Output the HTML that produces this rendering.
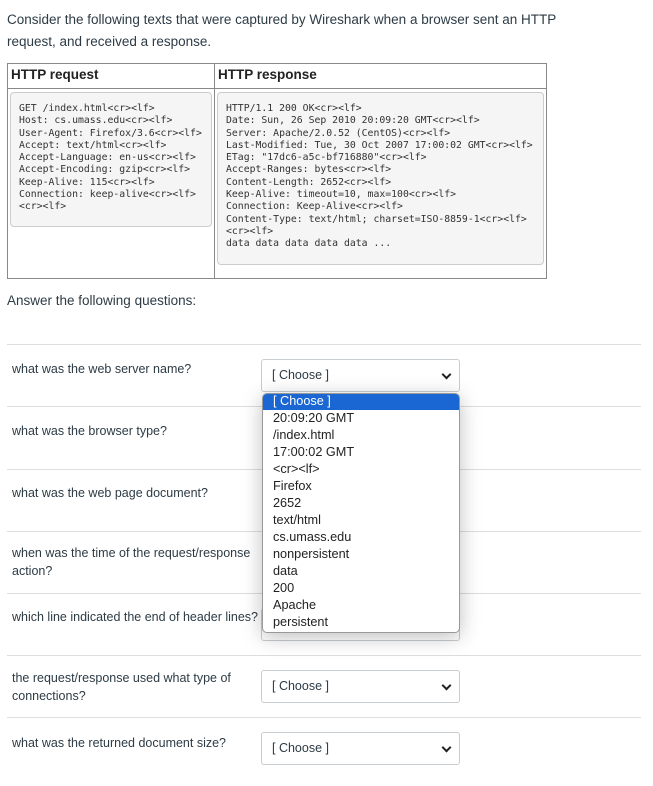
<!DOCTYPE html>
<html><head><meta charset="utf-8"><style>
body{margin:0;width:653px;height:786px;background:#fff;font-family:"Liberation Sans",sans-serif;color:#2d3b45;position:relative;overflow:hidden}
.a{position:absolute}
.t{font-size:13px;line-height:19px}
pre{margin:0;font-family:"DejaVu Sans Mono","Liberation Mono",monospace;font-size:9.8px;line-height:12.3px;color:#333}
.box{position:absolute;background:#f5f5f5;border:1px solid #ccc;border-radius:4px;padding:10px 8px;box-sizing:border-box}
.line{position:absolute;left:7px;width:634px;height:1px;background:#ddd}
.sel{position:absolute;left:261px;width:199px;height:33px;border:1px solid #c7cdd1;border-radius:3px;box-sizing:border-box;background:#fff;font-size:12.5px;line-height:31px;padding-left:10px;color:#2d3b45}
.sel:after{content:"";position:absolute;right:9px;top:11px;width:5px;height:5px;border-right:2px solid #222;border-bottom:2px solid #222;transform:rotate(45deg)}
.q{position:absolute;left:12px;font-size:12.5px;line-height:18px;color:#2d3b45}
.dd{position:absolute;left:262px;top:393px;width:198px;height:240px;background:#fff;border:1px solid #999;border-radius:5px;box-shadow:0 4px 20px rgba(0,0,0,.25);font-size:12.7px;line-height:17px;box-sizing:border-box}
.dd div{padding-left:10px;height:17px;color:#222}
.dd .h{background:#1a66d2;color:#fff;border-radius:4px 4px 0 0;height:16px;line-height:15px}
</style></head><body>
<div class="a t" style="left:7px;top:9px;width:595px;line-height:22px;font-size:13.5px">Consider the following texts that were captured by Wireshark when a browser sent an HTTP request, and received a response.</div>
<div class="a" style="left:7px;top:63px;width:538px;height:214px;border:1px solid #888"></div>
<div class="a" style="left:7px;top:88px;width:540px;height:1px;background:#888"></div>
<div class="a" style="left:214px;top:63px;width:1px;height:216px;background:#888"></div>
<div class="a" style="left:11px;top:67px;font-weight:bold;font-size:13.5px;color:#222">HTTP request</div>
<div class="a" style="left:218px;top:67px;font-weight:bold;font-size:13.5px;color:#222">HTTP response</div>
<div class="box" style="left:10px;top:92px;width:202px;height:135px"><pre>GET /index.html&lt;cr&gt;&lt;lf&gt;
Host: cs.umass.edu&lt;cr&gt;&lt;lf&gt;
User-Agent: Firefox/3.6&lt;cr&gt;&lt;lf&gt;
Accept: text/html&lt;cr&gt;&lt;lf&gt;
Accept-Language: en-us&lt;cr&gt;&lt;lf&gt;
Accept-Encoding: gzip&lt;cr&gt;&lt;lf&gt;
Keep-Alive: 115&lt;cr&gt;&lt;lf&gt;
Connection: keep-alive&lt;cr&gt;&lt;lf&gt;
&lt;cr&gt;&lt;lf&gt;</pre></div>
<div class="box" style="left:217px;top:92px;width:327px;height:173px"><pre>HTTP/1.1 200 OK&lt;cr&gt;&lt;lf&gt;
Date: Sun, 26 Sep 2010 20:09:20 GMT&lt;cr&gt;&lt;lf&gt;
Server: Apache/2.0.52 (CentOS)&lt;cr&gt;&lt;lf&gt;
Last-Modified: Tue, 30 Oct 2007 17:00:02 GMT&lt;cr&gt;&lt;lf&gt;
ETag: "17dc6-a5c-bf716880"&lt;cr&gt;&lt;lf&gt;
Accept-Ranges: bytes&lt;cr&gt;&lt;lf&gt;
Content-Length: 2652&lt;cr&gt;&lt;lf&gt;
Keep-Alive: timeout=10, max=100&lt;cr&gt;&lt;lf&gt;
Connection: Keep-Alive&lt;cr&gt;&lt;lf&gt;
Content-Type: text/html; charset=ISO-8859-1&lt;cr&gt;&lt;lf&gt;
&lt;cr&gt;&lt;lf&gt;
data data data data data ...</pre></div>
<div class="a t" style="left:7px;top:291px;font-size:13.5px">Answer the following questions:</div>

<div class="line" style="top:344px"></div>
<div class="line" style="top:406px"></div>
<div class="line" style="top:469px"></div>
<div class="line" style="top:531px"></div>
<div class="line" style="top:593px"></div>
<div class="line" style="top:655px"></div>
<div class="line" style="top:717px"></div>

<div class="q" style="top:360px">what was the web server name?</div>
<div class="q" style="top:422px">what was the browser type?</div>
<div class="q" style="top:484px">what was the web page document?</div>
<div class="q" style="top:544px;width:250px">when was the time of the request/response action?</div>
<div class="q" style="top:608px">which line indicated the end of header lines?</div>
<div class="q" style="top:669px;width:240px">the request/response used what type of connections?</div>
<div class="q" style="top:734px">what was the returned document size?</div>

<div class="sel" style="top:359px">[ Choose ]</div>
<div class="sel" style="top:608px;height:33px"></div>
<div class="sel" style="top:670px">[ Choose ]</div>
<div class="sel" style="top:732px">[ Choose ]</div>

<div class="dd">
<div class="h">[ Choose ]</div>
<div>20:09:20 GMT</div><div>/index.html</div><div>17:00:02 GMT</div><div>&lt;cr&gt;&lt;lf&gt;</div><div>Firefox</div><div>2652</div><div>text/html</div><div>cs.umass.edu</div><div>nonpersistent</div><div>data</div><div>200</div><div>Apache</div><div>persistent</div>
</div>
</body></html>
